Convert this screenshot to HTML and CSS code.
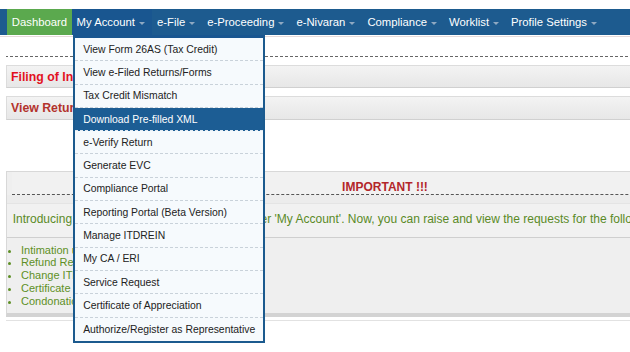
FILE: index.html
```html
<!DOCTYPE html>
<html>
<head>
<meta charset="utf-8">
<link rel="stylesheet" href="styles.css">
</head>
<body>
<div class="topstrip"></div>
<nav class="navbar">
  <div class="nav-item nav-dash">Dashboard</div>
  <div class="nav-item nav-active">My Account<span class="caret"></span>
    <ul class="dropdown">
      <li>View Form 26AS (Tax Credit)</li>
      <li>View e-Filed Returns/Forms</li>
      <li>Tax Credit Mismatch</li>
      <li class="hl">Download Pre-filled XML</li>
      <li>e-Verify Return</li>
      <li>Generate EVC</li>
      <li>Compliance Portal</li>
      <li>Reporting Portal (Beta Version)</li>
      <li>Manage ITDREIN</li>
      <li>My CA / ERI</li>
      <li>Service Request</li>
      <li>Certificate of Appreciation</li>
      <li class="last">Authorize/Register as Representative</li>
    </ul>
  </div>
  <div class="nav-item">e-File<span class="caret"></span></div>
  <div class="nav-item">e-Proceeding<span class="caret"></span></div>
  <div class="nav-item">e-Nivaran<span class="caret"></span></div>
  <div class="nav-item">Compliance<span class="caret"></span></div>
  <div class="nav-item">Worklist<span class="caret"></span></div>
  <div class="nav-item">Profile Settings<span class="caret"></span></div>
</nav>
<div class="rule"></div>
<div class="page">
  <div class="dash-line"></div>
  <div class="bar bar-red">Filing of Income Tax Return</div>
  <div class="bar bar-brown">View Returns / Forms</div>
  <div class="notice">
    <div class="notice-head">IMPORTANT !!!</div>
    <div class="notice-band"></div>
    <div class="notice-intro">Introducing 'Service Request' functionality, under 'My Account'. Now, you can raise and view the requests for the following:</div>
    <ul class="notice-list">
      <li>Intimation u/s 143(1)</li>
      <li>Refund Re-issue</li>
      <li>Change ITR Form</li>
      <li>Certificate of TDS</li>
      <li>Condonation</li>
    </ul>
  </div>
  <div class="bottom-rule"></div>
</div>
</body>
</html>
```

FILE: styles.css
```css
html, body {
  margin: 0;
  padding: 0;
  background: #ffffff;
}
body {
  font-family: "Liberation Sans", Arial, sans-serif;
  width: 630px;
  height: 352px;
  overflow: hidden;
}
.topstrip {
  height: 9px;
}
.navbar {
  display: flex;
  height: 26px;
  width: 630px;
  background: #1d5b8f;
  padding-left: 7.3px;
  box-sizing: border-box;
  position: relative;
  z-index: 5;
}
.nav-item {
  display: flex;
  align-items: center;
  height: 26px;
  padding: 0 7px 0 5px;
  color: #ffffff;
  font-size: 11.3px;
  white-space: nowrap;
  position: relative;
}
.nav-dash {
  background: #5ba94e;
  padding: 0 4.5px;
}
.nav-active {
  background: #195690;
}
.caret {
  display: inline-block;
  width: 0;
  height: 0;
  margin-left: 4px;
  margin-top: 2px;
  border-left: 3px solid transparent;
  border-right: 3px solid transparent;
  border-top: 3px solid #8fa9c2;
}
.dropdown {
  position: absolute;
  top: 26px;
  left: 1px;
  width: 192.6px;
  box-sizing: border-box;
  margin: 0;
  padding: 0;
  list-style: none;
  background: #f6fafd;
  border: 2px solid #1b5a8e;
  border-top: 3px solid #195690;
  z-index: 10;
}
.dropdown li {
  height: 23.3px;
  box-sizing: border-box;
  display: flex;
  align-items: center;
  padding-left: 8.6px;
  color: #222222;
  font-size: 10.4px;
  border-bottom: 1px dashed #c9d2da;
}
.dropdown li.hl {
  background: #1c5d94;
  color: #ffffff;
  border-bottom: 1px dashed #dfe9f2;
}
.dropdown li.last {
  border-bottom: none;
}
.rule {
  height: 1px;
  margin-top: 1px;
  background: #e6dada;
  width: 630px;
}
.page {
  margin-left: 6px;
  width: 624px;
  overflow: hidden;
}
.page > * {
  width: 758px;
}
.dash-line {
  margin-top: 19px;
  margin-left: -1px;
  border-top: 1px dashed #666666;
}
.bar {
  margin-top: 8px;
  height: 23px;
  box-sizing: border-box;
  border: 1px solid #dcdcdc;
  border-bottom-color: #d0d0d0;
  background: linear-gradient(#f3f3f3, #e7e7e7);
  padding-left: 4px;
  display: flex;
  align-items: center;
  font-size: 12.3px;
  font-weight: bold;
  white-space: nowrap;
}
.bar-red {
  color: #e2121f;
}
.bar-brown {
  height: 24px;
  color: #b3332c;
}
.notice {
  margin-top: 51px;
  box-sizing: border-box;
  border: 1px solid #d8d8d8;
  border-bottom: 4px solid #d3d3d3;
  background: #efefef;
}
.notice-head {
  margin: 0 5px;
  padding-top: 8px;
  height: 14px;
  line-height: 14px;
  text-align: center;
  color: #b3262a;
  font-size: 12px;
  font-weight: bold;
  border-bottom: 1px dashed #555555;
  background: #f1f1f1;
}
.notice-band {
  height: 8px;
  background: #ececec;
}
.notice-intro {
  border-top: 1px solid #e4e4e4;
  border-bottom: 1px solid #cfcfcf;
  background: #f1f1f1;
  padding: 8px 5px 11px 5.7px;
  line-height: 14px;
  font-size: 12px;
  color: #5a8a26;
  white-space: nowrap;
  overflow: hidden;
}
.notice-list {
  margin: 0;
  padding: 5.5px 0 4.5px 14px;
  list-style: disc;
  list-style-position: outside;
  font-size: 11px;
  line-height: 12.9px;
  color: #5e8f26;
}
.bottom-rule {
  margin-top: 3px;
  margin-left: -6px;
  height: 1px;
  background: #e2e2e2;
}
```
